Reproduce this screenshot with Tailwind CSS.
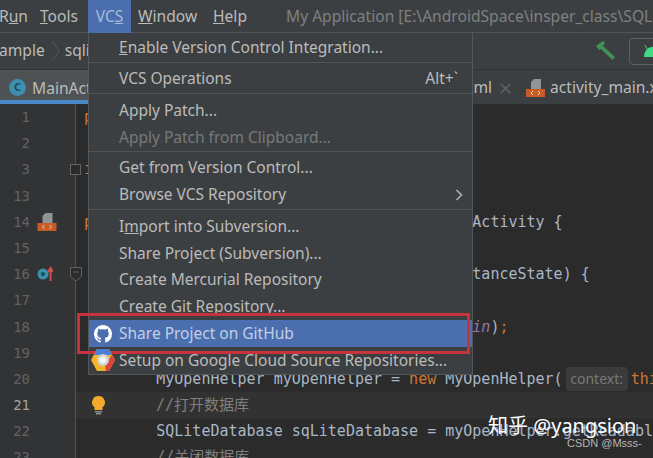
<!doctype html>
<html><head><meta charset="utf-8">
<script src="https://cdn.jsdelivr.net/npm/@tailwindcss/browser@4"></script>
</head>
<body class="bg-[#2b2b2b]">
<div class="relative w-[653px] h-[458px] overflow-hidden flex flex-col bg-[#2b2b2b] font-['Noto_Sans','Open_Sans',sans-serif] text-[#bbbbbb]">

  <!-- menu bar -->
  <div class="h-[33px] shrink-0 flex items-center bg-[#3c3f41] text-[15.6px] whitespace-nowrap border-b border-[#515355]">
    <span class="shrink-0 pt-[2px] ml-[-1px] w-[41px]">R<u>u</u>n</span>
    <span class="shrink-0 pt-[2px] w-[48px]"><u>T</u>ools</span>
    <span class="shrink-0 pt-[2px] w-[43px] h-[33px] flex items-center justify-center bg-[#4b6eaf] text-[#a9bcd9]">VC<u>S</u></span>
    <span class="shrink-0 pt-[2px] ml-[7px] w-[75px]"><u>W</u>indow</span>
    <span class="shrink-0 pt-[2px] w-[73px]"><u>H</u>elp</span>
    <span class="shrink-0 pt-[2px] text-[#7f8183]">My Application [E:\AndroidSpace\insper_class\SQLite</span>
  </div>

  <!-- navigation bar -->
  <div class="h-[37px] shrink-0 flex items-center bg-[#3c3f41] text-[15.6px] whitespace-nowrap border-b border-[#323232]">
    <span class="shrink-0 ml-[-1px]">ample</span>
    <svg class="shrink-0 ml-[6px]" width="10" height="22" viewBox="0 0 10 22" fill="none" stroke="#55585a"><path d="M1 1l7 10-7 10"/></svg>
    <span class="shrink-0 ml-[4px] w-[530px]">sqlite</span>
    <svg class="shrink-0" width="24" height="24" viewBox="0 0 24 24" fill="#3f9155"><path d="M1 7l7-5 2 2-2 3 12 11-2.500 3L6 10l-2 1z"/></svg>
    <div class="ml-[10px] w-[60px] h-[27px] shrink-0 rounded-[4px] border border-[#5e6163] flex items-center pl-[13px]">
      <svg width="18" height="12" viewBox="0 0 18 12" fill="#3ddc84"><path d="M1 12C1 6 5 2 9 2s8 4 8 10z"/><path d="M4 4L2 0M14 4l2-4" stroke="#3ddc84"/></svg>
    </div>
  </div>

  <!-- tabs -->
  <div class="h-[34px] shrink-0 flex bg-[#3c3f41] text-[15.6px] whitespace-nowrap">
    <div class="w-[440px] h-[34px] shrink-0 flex items-start pt-[7px] pl-[9px] bg-[#4e5254] border-b-4 border-[#4a88c7]">
      <span class="w-[17px] h-[17px] mt-[2px] rounded-full bg-[#3d8fb0] text-[#1f4a5c] text-[11px] font-bold flex items-center justify-center">C</span>
      <span class="ml-[6px]">MainActivity.java</span>
    </div>
    <div class="flex items-center pt-[2px]">
      <span class="shrink-0 ml-[21px]">.xml</span>
      <svg class="shrink-0 ml-[8px]" width="11" height="11" viewBox="0 0 12 12" stroke="#626567" stroke-width="1.500"><path d="M1 1l10 10M11 1L1 11"/></svg>
      <svg class="shrink-0 ml-[15px]" width="19" height="20" viewBox="0 0 19 20"><path d="M8 1h7v10H5V4z" fill="#8f9497"/><rect x="0" y="11" width="19" height="8" fill="#c75c27"/><path d="M7 13l-2 2 2 2M12 13l2 2-2 2" fill="none" stroke="#f2d0bd"/></svg>
      <span class="shrink-0 ml-[5px]">activity_main.xml</span>
    </div>
  </div>

  <!-- editor -->
  <div class="flex-1 min-h-0 overflow-hidden grid auto-rows-[26.2px] font-['DejaVu_Sans_Mono',monospace] text-[15px] leading-[26.2px] whitespace-pre text-[#a9b7c6]">
    <div class="flex"><div class="w-[76px] shrink-0 bg-[#313335] border-r border-[#505254] text-[#606366] text-[14px]"><span class="block w-[30px] text-right">1</span></div><div class="pl-[8px]"><span class="text-[#cc7832]">package</span> com.example.sqlite;</div></div>
    <div class="flex"><div class="w-[76px] shrink-0 bg-[#313335] border-r border-[#505254] text-[#606366] text-[14px]"><span class="block w-[30px] text-right">2</span></div><div class="pl-[8px]"></div></div>
    <div class="flex"><div class="relative w-[76px] shrink-0 bg-[#313335] border-r border-[#505254] text-[#606366] text-[14px]"><span class="block w-[30px] text-right">3</span><span class="absolute left-[70px] top-[8px] w-[11px] h-[11px] border border-[#606366] bg-[#2b2b2b]"></span></div><div class="pl-[8px]"><span class="text-[#cc7832]">import</span> ...</div></div>
    <div class="flex"><div class="w-[76px] shrink-0 bg-[#313335] border-r border-[#505254] text-[#606366] text-[14px]"><span class="block w-[30px] text-right">13</span></div><div class="pl-[8px]"></div></div>
    <div class="flex"><div class="relative w-[76px] shrink-0 bg-[#313335] border-r border-[#505254] text-[#606366] text-[14px]"><span class="block w-[30px] text-right">14</span><svg class="absolute left-[37px] top-[3px]" width="20" height="20" viewBox="0 0 19 20"><path d="M8 1h7v10H5V4z" fill="#8f9497"/><rect x="0" y="11" width="19" height="8" fill="#c75c27"/><path d="M7 13l-2 2 2 2M12 13l2 2-2 2" fill="none" stroke="#f2d0bd"/></svg></div><div class="pl-[8px]"><span class="text-[#cc7832]">public class</span> MainActivity <span class="text-[#cc7832]">extends</span> AppCompatActivity {</div></div>
    <div class="flex"><div class="w-[76px] shrink-0 bg-[#313335] border-r border-[#505254] text-[#606366] text-[14px]"><span class="block w-[30px] text-right">15</span></div><div class="pl-[8px]"></div></div>
    <div class="flex"><div class="relative w-[76px] shrink-0 bg-[#313335] border-r border-[#505254] text-[#606366] text-[14px]"><span class="block w-[30px] text-right">16</span><svg class="absolute left-[37px] top-[5px]" width="16" height="16" viewBox="0 0 16 16"><circle cx="6" cy="8" r="5.500" fill="#3d8fb0"/><circle cx="6" cy="8" r="2" fill="#1f4a5c"/><path d="M13.500 15V3M11 6l2.500-4L16 6" fill="none" stroke="#c7524c" stroke-width="2"/></svg><svg class="absolute left-[70px] top-[6px]" width="12" height="15" viewBox="0 0 12 15" fill="#2b2b2b" stroke="#606366"><path d="M.5.500h11v9L6 14 .5 9.500z"/><path d="M3 5h6"/></svg></div><div class="pl-[8px]">    <span class="text-[#cc7832]">protected void</span> onCreate(Bundle savedInstanceState) {</div></div>
    <div class="flex"><div class="w-[76px] shrink-0 bg-[#313335] border-r border-[#505254] text-[#606366] text-[14px]"><span class="block w-[30px] text-right">17</span></div><div class="pl-[8px]"></div></div>
    <div class="flex"><div class="w-[76px] shrink-0 bg-[#313335] border-r border-[#505254] text-[#606366] text-[14px]"><span class="block w-[30px] text-right">18</span></div><div class="pl-[8px]">        setContentView(R.layout.activity_ma<span class="italic text-[#9876aa]">in</span>)<span class="text-[#cc7832]">;</span></div></div>
    <div class="flex"><div class="w-[76px] shrink-0 bg-[#313335] border-r border-[#505254] text-[#606366] text-[14px]"><span class="block w-[30px] text-right">19</span></div><div class="pl-[8px]"></div></div>
    <div class="flex"><div class="w-[76px] shrink-0 bg-[#313335] border-r border-[#505254] text-[#606366] text-[14px]"><span class="block w-[30px] text-right">20</span></div><div class="pl-[8px] flex shrink-0">        MyOpenHelper myOpenHelper = <span class="text-[#cc7832]">new</span> MyOpenHelper(<span class="ml-[3px] mr-[3px] my-[1px] h-[24px] w-[62px] rounded-[4px] bg-[#3b3b3b] text-[#787878] text-[14px] leading-[24px] text-center font-['Noto_Sans',sans-serif]">context:</span><span class="text-[#cc7832]">this</span></div></div>
    <div class="flex"><div class="w-[76px] shrink-0 bg-[#313335] border-r border-[#505254] text-[#a4a3a3] text-[14px]"><span class="block w-[30px] text-right">21</span></div><div class="flex-1 bg-[#323232] pl-[8px] flex items-center"><svg class="ml-[7px]" width="15" height="19" viewBox="0 0 15 19"><path d="M7.500 0a6.500 6.500 0 0 0-4 11.600V14h8v-2.400A6.500 6.500 0 0 0 7.500 0z" fill="#f2a92c"/><rect x="4" y="15" width="7" height="1.500" fill="#8c8c8c"/><rect x="5" y="17" width="5" height="1.500" fill="#8c8c8c"/></svg><span class="ml-[50px] text-[#808080] font-['DejaVu_Sans_Mono','Noto_Sans_CJK_SC',monospace]">//打开数据库</span></div></div>
    <div class="flex"><div class="w-[76px] shrink-0 bg-[#313335] border-r border-[#505254] text-[#606366] text-[14px]"><span class="block w-[30px] text-right">22</span></div><div class="pl-[8px] shrink-0">        SQLiteDatabase sqLiteDatabase = myOpenHelper.getReadableDatabase()<span class="text-[#cc7832]">;</span></div></div>
    <div class="flex"><div class="w-[76px] shrink-0 bg-[#313335] border-r border-[#505254] text-[#606366] text-[14px]"><span class="block w-[30px] text-right">23</span></div><div class="pl-[8px] text-[#808080] font-['DejaVu_Sans_Mono','Noto_Sans_CJK_SC',monospace]">        //关闭数据库</div></div>
  </div>

  <!-- VCS dropdown -->
  <div class="absolute left-[88px] top-[33px] w-[385px] h-[342px] bg-[#3c3f41] border-x border-[#55585a] border-b text-[15.5px] leading-[27px] whitespace-nowrap text-[#bbbbbb]">
    <div class="h-[30px] border-b border-[#515355] pl-[30px] leading-[29px]"><u>E</u>nable Version Control Integration...</div>
    <div class="h-[31px] border-b border-[#515355] pl-[30px] pr-[14px] flex justify-between leading-[31px]"><span>VCS Operations</span><span>Alt+`</span></div>
    <div class="h-[58px] pt-[3px] border-b border-[#515355] pl-[30px]">
      <div class="h-[27px]">Apply Patch...</div>
      <div class="h-[27px] text-[#77797b]">Apply Patch from Clipboard...</div>
    </div>
    <div class="h-[58px] pt-[2px] border-b border-[#515355] pl-[30px]">
      <div class="h-[27px]">Get from Version Control...</div>
      <div class="h-[27px] flex justify-between items-center pr-[9px]"><span>Browse VCS Repository</span><svg width="8" height="12" viewBox="0 0 8 12" fill="none" stroke="#afb1b3" stroke-width="1.600"><path d="M1.500 1l5 5-5 5"/></svg></div>
    </div>
    <div class="pt-[3px]">
      <div class="h-[27px] pl-[30px]">I<u>m</u>port into Subversion...</div>
      <div class="h-[26px] pl-[30px]">Share Project (Subversion)...</div>
      <div class="h-[27px] pl-[30px]">Create Mercurial Repository</div>
      <div class="h-[27px] pl-[30px]">Create Git Repository...</div>
      <div class="h-[27px] pl-[5px] flex items-center bg-[#4b6eaf] text-[#c3cfe4]">
        <svg width="18" height="18" viewBox="0 0 16 16" fill="#ffffff"><path d="M8 0C3.580 0 0 3.580 0 8c0 3.540 2.290 6.530 5.470 7.590.4.07.55-.17.55-.38 0-.19-.01-.82-.01-1.490-2.010.37-2.530-.49-2.690-.94-.09-.23-.48-.94-.82-1.130-.28-.15-.68-.52-.01-.53.63-.01 1.080.58 1.230.82.72 1.210 1.870.87 2.330.66.07-.52.28-.87.51-1.070-1.780-.2-3.640-.89-3.640-3.950 0-.87.31-1.590.82-2.150-.08-.2-.36-1.020.08-2.120 0 0 .67-.21 2.200.82.64-.18 1.320-.27 2-.27.68 0 1.360.09 2 .27 1.530-1.040 2.200-.82 2.200-.82.44 1.100.16 1.920.08 2.120.51.56.82 1.270.82 2.150 0 3.070-1.870 3.750-3.650 3.950.29.25.54.73.54 1.480 0 1.070-.01 1.930-.01 2.200 0 .21.15.46.55.38A8.013 8.013 0 0016 8c0-4.420-3.580-8-8-8z"/></svg>
        <span class="ml-[7px]">Share Project on GitHub</span>
      </div>
      <div class="h-[27px] pl-[30px]">Setup on Google Cloud Source Repositories...</div>
    </div>
  </div>

  <!-- red annotation -->
  <div class="absolute left-[77px] top-[313px] w-[393px] h-[41px] border-[3px] border-[#c8323c]"></div>

  <!-- Google Cloud icon -->
  <svg class="absolute left-[91px] top-[349px]" width="24" height="22" viewBox="0 0 24 22">
    <path d="M6 0h12l6 11-6 11H6L0 11z" fill="#f3b32a"/>
    <path d="M6 0h12l3 6H3z" fill="#4a7fd8"/>
    <path d="M21 6l3 5-6 11h-3l-1-6z" fill="#d9453b"/>
    <circle cx="12" cy="11" r="6" fill="#cfd3d6"/>
    <circle cx="12" cy="11" r="3.500" fill="#f4f4f4"/>
  </svg>

  <!-- watermarks -->
  <div class="absolute left-[488px] top-[412px] text-[20px] leading-[28px] text-white whitespace-nowrap font-['Noto_Sans','Noto_Sans_CJK_SC',sans-serif]">知乎 @yangsion</div>
  <div class="absolute left-[567px] top-[436px] text-[11px] leading-[15px] text-[#b5b5b5] whitespace-nowrap font-['Liberation_Sans',sans-serif]">CSDN @Msss-</div>
</div>
</body></html>
